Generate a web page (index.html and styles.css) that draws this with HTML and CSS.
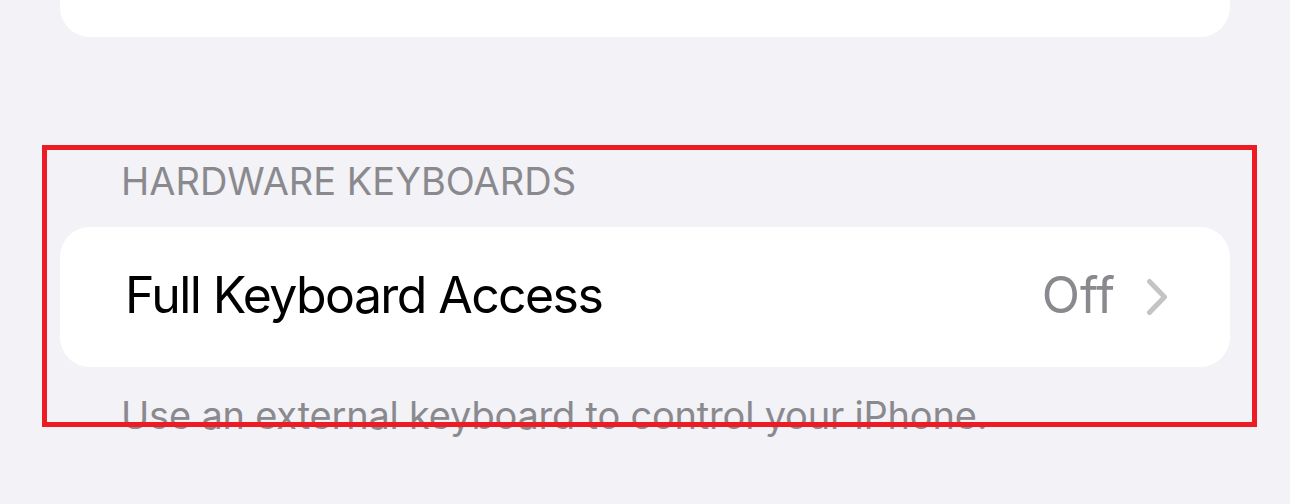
FILE: index.html
```html
<!DOCTYPE html>
<html lang="en">
<head>
    <meta charset="UTF-8">
    <meta name="viewport" content="width=device-width, initial-scale=1.0">
    <title>Keyboards</title>
    <link rel="stylesheet" href="styles.css">
</head>
<body>
    <div class="page">
        <div class="card card-top"></div>

        <div class="section">
            <div class="section-header">HARDWARE KEYBOARDS</div>
            <div class="card">
                <div class="row">
                    <span class="row-title">Full Keyboard Access</span>
                    <span class="row-value">Off</span>
                    <svg class="chevron" width="22" height="38" viewBox="0 0 22 38">
                        <polyline points="3.5,3.5 18.5,19 3.5,34.5" fill="none" stroke="#c4c4c7" stroke-width="5" stroke-linecap="round" stroke-linejoin="round"/>
                    </svg>
                </div>
            </div>
            <div class="section-footer">Use an external keyboard to control your iPhone.</div>
        </div>
    </div>

    <div class="highlight"></div>
</body>
</html>
```

FILE: styles.css
```css
body {
    margin: 0;
    background-color: #f2f2f7;
    font-family: Inter, "Noto Sans", sans-serif;
    overflow: hidden;
}
.page {
    padding: 0 60px;
}
.card {
    background-color: #fff;
    border-radius: 30px;
}
.card-top {
    height: 37px;
    border-radius: 0 0 30px 30px;
}
.section {
    padding-top: 121px;
}
.section-header {
    padding-left: 61px;
    font-size: 38px;
    line-height: 46px;
    color: #8a8a8e;
    margin-bottom: 23px;
}
.row {
    height: 140px;
    display: flex;
    align-items: center;
    padding: 0 62px 4px 65px;
    box-sizing: border-box;
}
.row-title {
    flex: 1;
    font-size: 50px;
    letter-spacing: -1.6px;
    color: #000;
}
.row-value {
    font-size: 50px;
    color: #8a8a8e;
    margin-right: 31px;
}
.chevron {
    display: block;
    margin-top: 4px;
}
.section-footer {
    padding-left: 61px;
    margin-top: 25px;
    font-size: 38px;
    line-height: 46px;
    letter-spacing: -0.2px;
    color: #8a8a8e;
}
.highlight {
    position: absolute;
    left: 42px;
    top: 145px;
    width: 1215px;
    height: 282px;
    box-sizing: border-box;
    border: 5px solid #ed1c24;
}
```
